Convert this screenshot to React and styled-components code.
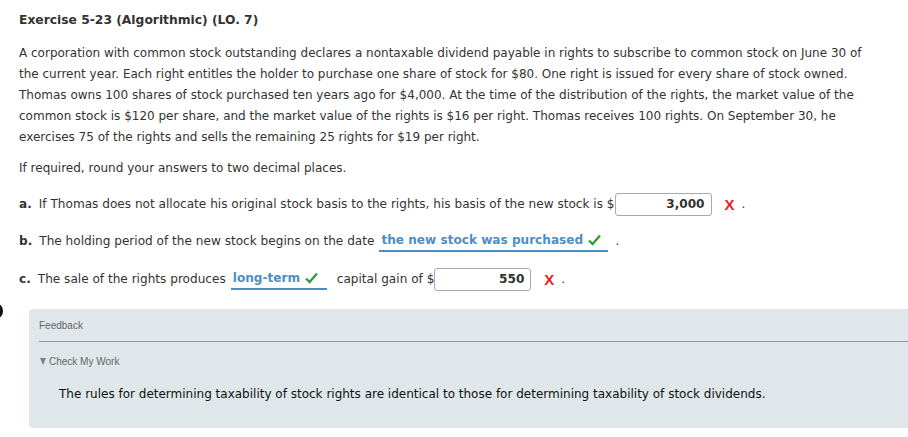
import styled, { createGlobalStyle } from "styled-components";

const GlobalStyle = createGlobalStyle`
  html, body { margin: 0; padding: 0; background: #fff; }
  body {
    font-family: "DejaVu Sans", Verdana, sans-serif;
    font-size: 12px;
    color: #333;
  }
`;

const problemLines = [
  "A corporation with common stock outstanding declares a nontaxable dividend payable in rights to subscribe to common stock on June 30 of",
  "the current year. Each right entitles the holder to purchase one share of stock for $80. One right is issued for every share of stock owned.",
  "Thomas owns 100 shares of stock purchased ten years ago for $4,000. At the time of the distribution of the rights, the market value of the",
  "common stock is $120 per share, and the market value of the rights is $16 per right. Thomas receives 100 rights. On September 30, he",
  "exercises 75 of the rights and sells the remaining 25 rights for $19 per right.",
];

const App = () => {
  return (
    <Page>
      <GlobalStyle />
      <Edge />
      <Content>
        <Title>Exercise 5-23 (Algorithmic) (LO. 7)</Title>
        <Problem>
          {problemLines.map((line) => (
            <Line key={line}>{line}</Line>
          ))}
        </Problem>
        <Note>If required, round your answers to two decimal places.</Note>

        <Part $top={14}>
          <Letter>a.</Letter>
          If Thomas does not allocate his original stock basis to the rights, his basis of the new stock is $
          <Answer>3,000</Answer>
          <Wrong>X</Wrong>
          <Dot>.</Dot>
        </Part>
        <Part $top={15}>
          <Letter>b.</Letter>
          The holding period of the new stock begins on the date
          <Choice $width={229}>
            the new stock was purchased <Check />
          </Choice>
          <Dot>.</Dot>
        </Part>
        <Part $top={16}>
          <Letter>c.</Letter>
          The sale of the rights produces
          <Choice $width={96}>
            long-term <Check />
          </Choice>
          <Gap />
          capital gain of $
          <Answer>550</Answer>
          <Wrong>X</Wrong>
          <Dot>.</Dot>
        </Part>
      </Content>

      <Feedback>
        <FeedbackLabel>Feedback</FeedbackLabel>
        <Rule />
        <Toggle>
          <Arrow />Check My Work
        </Toggle>
        <Explanation>
          The rules for determining taxability of stock rights are identical to those for determining taxability of stock dividends.
        </Explanation>
      </Feedback>
    </Page>
  );
};

const Check = () => (
  <svg width="13" height="12" viewBox="0 0 13 12" style={{ marginLeft: 5 }}>
    <path d="M1 6.5 L4.6 10 L12 1.5" fill="none" stroke="#3a9a3a" strokeWidth="2.4" />
  </svg>
);

export default App;

const Page = styled.div`
  position: relative;
  width: 908px;
  height: 437px;
  overflow: hidden;
`;

const Edge = styled.div`
  position: absolute;
  left: -8px;
  top: 304px;
  width: 11px;
  height: 14px;
  border-radius: 50%;
  background: #111;
`;

const Content = styled.div`
  padding: 12px 0 0 19px;
`;

const Title = styled.div`
  font-weight: bold;
  font-size: 12.3px;
  line-height: 16px;
  margin-bottom: 15px;
`;

const Problem = styled.div`
  line-height: 21px;
`;

const Line = styled.div`
  white-space: nowrap;
`;

const Note = styled.p`
  margin: 10px 0 0;
  line-height: 21px;
`;

const Part = styled.div`
  display: flex;
  align-items: center;
  height: 22px;
  margin-top: ${(p) => p.$top}px;
  white-space: nowrap;
  font-size: 12.1px;
`;

const Letter = styled.span`
  font-weight: bold;
  margin-right: 7px;
`;

const Answer = styled.span`
  display: inline-block;
  box-sizing: border-box;
  width: 97px;
  height: 23px;
  line-height: 21px;
  border: 1px solid #a9a9a9;
  border-radius: 3px;
  text-align: right;
  padding-right: 6px;
  font-weight: bold;
  color: #333;
`;

const Wrong = styled.span`
  font-family: "Liberation Sans", Arial, sans-serif;
  color: #ee1c1c;
  font-weight: bold;
  font-size: 15px;
  margin-left: 13px;
`;

const Dot = styled.span`
  margin-left: 7px;
`;

const Choice = styled.span`
  display: inline-flex;
  align-items: center;
  box-sizing: border-box;
  width: ${(p) => p.$width}px;
  height: 22px;
  margin-left: 5px;
  padding-left: 2px;
  border-bottom: 2px solid #4f8ec4;
  color: #4f8ec4;
  font-weight: bold;
`;

const Gap = styled.span`
  width: 10px;
`;

const Feedback = styled.div`
  margin: 19px 0 0 29px;
  width: 900px;
  height: 119px;
  box-sizing: border-box;
  background: #dfe7ea;
  border-radius: 4px 0 0 4px;
  padding: 11px 0 0 10px;
`;

const FeedbackLabel = styled.div`
  font-family: "Liberation Sans", Arial, sans-serif;
  font-size: 10px;
  color: #666;
  line-height: 12px;
`;

const Rule = styled.div`
  margin-top: 9px;
  height: 1px;
  background: #999;
`;

const Toggle = styled.div`
  display: flex;
  align-items: center;
  margin-top: 14px;
  font-family: "Liberation Sans", Arial, sans-serif;
  font-size: 10px;
  color: #666;
  line-height: 12px;
`;

const Arrow = styled.span`
  width: 0;
  height: 0;
  border-left: 3px solid transparent;
  border-right: 3px solid transparent;
  border-top: 7px solid #808080;
  margin: 0 3px 1px 1px;
`;

const Explanation = styled.div`
  margin: 18px 0 0 20px;
  color: #111;
  line-height: 16px;
`;
